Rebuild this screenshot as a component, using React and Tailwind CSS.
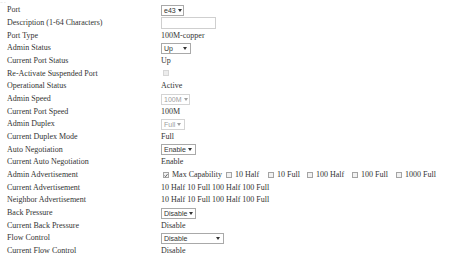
import React from 'react';

function Select({ value, width, disabled }) {
  return (
    <span
      className={`inline-flex h-[11px] items-center justify-between border bg-white pl-[2px] pr-[3px] text-[7px] leading-none ${
        disabled ? 'border-[#d4d4d4] text-[#a0a0a0]' : 'border-[#a9a9a9] text-[#333]'
      }`}
      style={{ width, fontFamily: '"Liberation Sans", Arial, sans-serif' }}
    >
      <span>{value}</span>
      <svg width="4" height="3" viewBox="0 0 4 3" className="ml-[2px] shrink-0">
        <path d="M0 0H4L2 3Z" fill={disabled ? '#a0a0a0' : '#333'} />
      </svg>
    </span>
  );
}

function Box({ checked, disabled }) {
  return (
    <span
      className={`inline-flex h-[6px] w-[6px] shrink-0 items-center justify-center border ${
        disabled ? 'border-[#d6d6d6] bg-[#ececec]' : 'border-[#a4a4a4] bg-[#f2f2f2]'
      }`}
    >
      {checked ? (
        <svg width="5" height="5" viewBox="0 0 5 5">
          <path d="M0.6 2.6L2 3.9L4.4 0.8" stroke="#444" strokeWidth="1" fill="none" />
        </svg>
      ) : null}
    </span>
  );
}

function Option({ label, checked, className }) {
  return (
    <span className={`flex items-center ${className}`}>
      <Box checked={checked} />
      <span className="ml-[3px]">{label}</span>
    </span>
  );
}

const rows = [
  ['Port', <Select value="e43" width="23px" />],
  ['Description (1-64 Characters)', <span className="inline-block h-[12px] w-[55px] border border-[#cfcfcf] bg-white" />],
  ['Port Type', '100M-copper'],
  ['Admin Status', <Select value="Up" width="30px" />],
  ['Current Port Status', 'Up'],
  ['Re-Activate Suspended Port', <span className="pl-[2px]"><Box disabled /></span>],
  ['Operational Status', 'Active'],
  ['Admin Speed', <Select value="100M" width="29px" disabled />],
  ['Current Port Speed', '100M'],
  ['Admin Duplex', <Select value="Full" width="24px" disabled />],
  ['Current Duplex Mode', 'Full'],
  ['Auto Negotiation', <Select value="Enable" width="35px" />],
  ['Current Auto Negotiation', 'Enable'],
  [
    'Admin Advertisement',
    <span className="flex items-center pl-[2px]">
      <Option checked label="Max Capability" className="w-[63px]" />
      <Option label="10 Half" className="w-[42px]" />
      <Option label="10 Full" className="w-[39px]" />
      <Option label="100 Half" className="w-[45px]" />
      <Option label="100 Full" className="w-[44px]" />
      <Option label="1000 Full" />
    </span>,
  ],
  ['Current Advertisement', '10 Half 10 Full 100 Half 100 Full'],
  ['Neighbor Advertisement', '10 Half 10 Full 100 Half 100 Full'],
  ['Back Pressure', <Select value="Disable" width="35px" />],
  ['Current Back Pressure', 'Disable'],
  ['Flow Control', <Select value="Disable" width="63px" />],
  ['Current Flow Control', 'Disable'],
];

export default function App() {
  return (
    <div
      className="relative h-[260px] w-[474px] overflow-hidden bg-white pt-[4px] text-[8px] text-[#333]"
      style={{ fontFamily: '"Liberation Serif", "Times New Roman", serif' }}
    >
      <span className="absolute left-0 top-0 text-[5px] leading-none text-[#bbb]">= -</span>
      {rows.map(([label, value], index) => (
        <div key={index} className="grid h-[12.68px] grid-cols-[154px_1fr] items-center pl-[7px]">
          <span className="whitespace-nowrap leading-none">{label}</span>
          <span className="flex items-center whitespace-nowrap leading-none">{value}</span>
        </div>
      ))}
    </div>
  );
}
